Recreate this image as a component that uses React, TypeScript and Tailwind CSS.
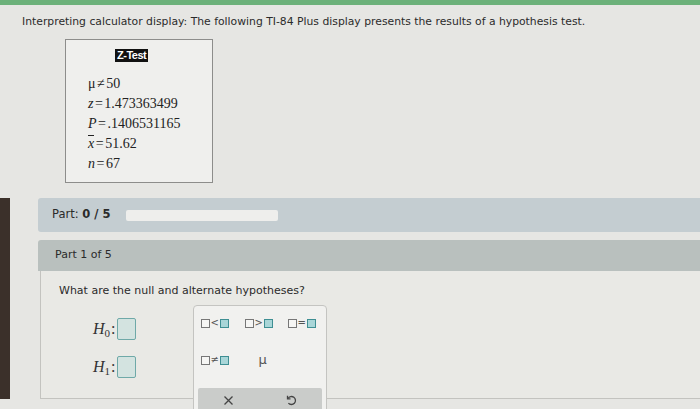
import type { ReactNode } from 'react'

const FONT = "font-['DejaVu_Sans',sans-serif]"
const SERIF = "font-['Liberation_Serif',serif]"

export default function App() {
  return (
    <div className={`h-[409px] w-[700px] overflow-hidden bg-[#e6e6e3] text-[#2b2b2b] ${FONT}`}>
      <div className="h-[5px] bg-[#6cb17a]" />
      <p className="pl-[22px] pt-[10px] text-[10.8px] leading-[14px]">
        Interpreting calculator display: The following TI-84 Plus display presents the results of a
        hypothesis test.
      </p>

      <CalculatorDisplay />

      <div className="mt-[15px] flex">
        <div className="w-[10px] shrink-0 bg-[#3b302a]" />
        <div className="flex-1 pl-[28px]">
          <div className="flex h-[34px] items-center rounded-l-[3px] bg-[#c4cdd1] pl-[14px] text-[11.5px]">
            <span>
              Part: <span className="font-bold">0 / 5</span>
            </span>
            <div className="ml-[16px] h-[11px] w-[152px] rounded-[2px] bg-[#eeeeec]" />
          </div>

          <div className="mt-[8px] flex h-[31px] items-center rounded-tl-[3px] bg-[#b9c0be] pl-[17px] text-[11px]">
            Part 1 of 5
          </div>

          <div className="ml-[2px] h-[128px] border-b border-l border-[#c3c3bf] bg-[#e9e9e5] pl-[18px]">
            <p className="pt-[13px] text-[11px] leading-[14px]">
              What are the null and alternate hypotheses?
            </p>
            <div className="mt-[7px] flex">
              <div className="flex flex-col gap-[14px] pl-[34px] pt-[12px]">
                <HypothesisRow sub="0" />
                <HypothesisRow sub="1" />
              </div>
              <SymbolPalette />
            </div>
          </div>
        </div>
      </div>
    </div>
  )
}

function CalculatorDisplay() {
  return (
    <div className="ml-[65px] mt-[10px] h-[144px] w-[148px] border border-[#8d8d8b] bg-[#efefed] pl-[22px] pt-[9px]">
      <div className="flex pl-[27px]">
        <span className="bg-[#111] px-[2px] text-[11px] font-bold leading-[13px] tracking-[-0.5px] text-white font-['Liberation_Sans',sans-serif]">
          Z-Test
        </span>
      </div>
      <div className={`mt-[12px] flex flex-col text-[14px] leading-[20px] text-[#222] ${SERIF}`}>
        <span>
          μ<Eq>≠</Eq>50
        </span>
        <span>
          <i>z</i>
          <Eq>=</Eq>1.473363499
        </span>
        <span>
          <i>P</i>
          <Eq>=</Eq>.1406531165
        </span>
        <span>
          <span className="border-t border-[#222] leading-[14px]">
            <i>x</i>
          </span>
          <Eq>=</Eq>51.62
        </span>
        <span>
          <i>n</i>
          <Eq>=</Eq>67
        </span>
      </div>
    </div>
  )
}

function Eq(props: { readonly children: ReactNode }) {
  return <span className="mx-[1.5px]">{props.children}</span>
}

function HypothesisRow(props: { readonly sub: string }) {
  return (
    <div className={`flex items-center text-[16px] text-[#333] ${SERIF}`}>
      <span className="italic">
        H<sub className="text-[11px] not-italic">{props.sub}</sub>
      </span>
      <span className="ml-[1px]">:</span>
      <span className="ml-[1px] h-[22px] w-[19px] rounded-[2px] border border-[#6fa9a8] bg-[#d3e3e0]" />
    </div>
  )
}

function SymbolPalette() {
  return (
    <div className="ml-[57px] flex h-[110px] w-[134px] shrink-0 flex-col rounded-[4px] border border-[#c4c4c1] bg-[#f1f1ef]">
      <div className="grid grid-cols-[44px_43px_43px] gap-y-[26px] pl-[7px] pt-[12px] text-[10px] text-[#555]">
        <Relation symbol="<" />
        <Relation symbol=">" />
        <Relation symbol="=" />
        <Relation symbol="≠" />
        <span className="pl-[14px] text-[13px] leading-[12px]">μ</span>
      </div>
      <div className="mx-[4px] mt-auto flex h-[26px] items-center justify-around rounded-t-[2px] bg-[#caccca] pb-[2px] text-[#444]">
        <Glyph>
          <svg width="11" height="11" viewBox="0 0 11 11" fill="none" stroke="currentColor" strokeWidth="1.3">
            <path d="M1.5 1.5 9.5 9.5M9.5 1.5 1.5 9.5" />
          </svg>
        </Glyph>
        <Glyph>
          <svg width="12" height="12" viewBox="0 0 12 12" fill="none" stroke="currentColor" strokeWidth="1.3">
            <path d="M3 4.5a4 4 0 1 1 0.4 4.6" />
            <path d="M2.5 1.8v3h3" />
          </svg>
        </Glyph>
      </div>
    </div>
  )
}

function Relation(props: { readonly symbol: string }) {
  return (
    <span className="flex items-center gap-[1px] leading-[10px]">
      <span className="h-[9px] w-[9px] border border-[#777] bg-[#f6f6f4]" />
      <span>{props.symbol}</span>
      <span className="h-[9px] w-[9px] border border-[#3f8f93] bg-[#a9d6d8]" />
    </span>
  )
}

function Glyph(props: { readonly children: ReactNode }) {
  return <span className="flex h-[12px] w-[12px] items-center justify-center">{props.children}</span>
}
